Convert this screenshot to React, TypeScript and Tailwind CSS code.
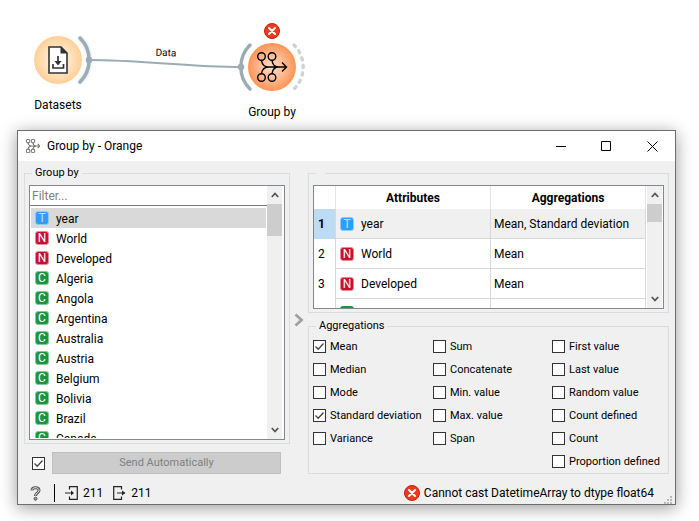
import { useState } from "react";

type Kind = "T" | "N" | "C";

const KIND_STYLE: Record<Kind, string> = {
  T: "bg-[#2f9df5] border-[#8ccbfa] text-[#b9e0ff]",
  N: "bg-[#c8102e] border-[#e58a98] text-white",
  C: "bg-[#1a9641] border-[#86c79a] text-white",
};

const VARIABLES: { name: string; kind: Kind }[] = [
  { name: "year", kind: "T" },
  { name: "World", kind: "N" },
  { name: "Developed", kind: "N" },
  { name: "Algeria", kind: "C" },
  { name: "Angola", kind: "C" },
  { name: "Argentina", kind: "C" },
  { name: "Australia", kind: "C" },
  { name: "Austria", kind: "C" },
  { name: "Belgium", kind: "C" },
  { name: "Bolivia", kind: "C" },
  { name: "Brazil", kind: "C" },
  { name: "Canada", kind: "C" },
];

const ROWS: { name: string; kind: Kind; agg: string }[] = [
  { name: "year", kind: "T", agg: "Mean, Standard deviation" },
  { name: "World", kind: "N", agg: "Mean" },
  { name: "Developed", kind: "N", agg: "Mean" },
];

const AGGREGATIONS = [
  ["Mean", "Median", "Mode", "Standard deviation", "Variance"],
  ["Sum", "Concatenate", "Min. value", "Max. value", "Span"],
  ["First value", "Last value", "Random value", "Count defined", "Count", "Proportion defined"],
];

function KindIcon({ kind }: { kind: Kind }) {
  return (
    <span
      className={`flex size-[14px] shrink-0 items-center justify-center rounded-[3px] border text-[12px] leading-[12px] ${KIND_STYLE[kind]}`}
    >
      {kind}
    </span>
  );
}

function ErrorIcon() {
  return (
    <svg className="size-4 shrink-0" viewBox="0 0 16 16" aria-hidden="true">
      <circle cx="8" cy="8" r="7.5" fill="#ee3a1c" stroke="#c4200c" />
      <path d="M5 5l6 6M11 5l-6 6" stroke="#fff" strokeWidth="2" strokeLinecap="round" />
    </svg>
  );
}

function GroupGlyph() {
  return (
    <g fill="none" stroke="currentColor">
      <circle cx="4.5" cy="4.5" r="3.8" />
      <circle cx="15" cy="4.5" r="3.8" />
      <circle cx="4.5" cy="25.5" r="3.8" />
      <circle cx="15" cy="25.5" r="3.8" />
      <path d="M4.5 8.5C5 12 7.5 15 12 15H29M4.5 21.5C5 18 7.5 15 12 15M15 8.5C15.5 12 18 15 22 15M15 21.5C15.5 18 18 15 22 15M25 10.5L29.5 15L25 19.5" />
    </g>
  );
}

function CheckBox({ id, checked, onChange, label }: { id: string; checked: boolean; onChange: () => void; label?: string }) {
  return (
    <span className="grid size-[13px] shrink-0">
      <input
        id={id}
        type="checkbox"
        aria-label={label}
        checked={checked}
        onChange={onChange}
        className="col-start-1 row-start-1 size-[13px] appearance-none border border-[#333333] bg-white"
      />
      {checked && (
        <svg className="pointer-events-none col-start-1 row-start-1 size-[13px]" viewBox="0 0 13 13" fill="none" aria-hidden="true">
          <path d="M2.5 6.5L5.2 9.2L10.5 3.5" stroke="#444" strokeWidth="1.3" />
        </svg>
      )}
    </span>
  );
}

function ScrollBar({ thumb, className }: { thumb: string; className: string }) {
  return (
    <div className={`flex w-[17px] shrink-0 flex-col ${className}`}>
      <div className="flex h-full flex-col bg-[#f0f0f0]">
        <button type="button" aria-label="Scroll up" className="flex h-[18px] items-center justify-center">
          <svg className="size-2" viewBox="0 0 8 8" fill="none" stroke="#555" strokeWidth="1.8">
            <path d="M0.8 6L4 2.5L7.2 6" />
          </svg>
        </button>
        <div className={`bg-[#cdcdcd] ${thumb}`} />
        <button type="button" aria-label="Scroll down" className="mt-auto flex h-[18px] items-center justify-center">
          <svg className="size-2" viewBox="0 0 8 8" fill="none" stroke="#555" strokeWidth="1.8">
            <path d="M0.8 2L4 5.5L7.2 2" />
          </svg>
        </button>
      </div>
    </div>
  );
}

function Workflow() {
  return (
    <div className="relative h-[130px]">
      <svg className="absolute top-0 left-0" width="340" height="130" viewBox="0 0 340 130" fill="none">
        <defs>
          <radialGradient id="data">
            <stop offset="0" stopColor="#fff1df" />
            <stop offset="0.5" stopColor="#ffe5c4" />
            <stop offset="1" stopColor="#ffcf96" />
          </radialGradient>
          <radialGradient id="transform">
            <stop offset="0" stopColor="#ffdcc6" />
            <stop offset="0.45" stopColor="#ffc09b" />
            <stop offset="1" stopColor="#ff9456" />
          </radialGradient>
          <filter id="glow" x="-50%" y="-20%" width="200%" height="140%">
            <feDropShadow dx="0" dy="0" stdDeviation="1.5" floodColor="#9cacb4" floodOpacity="0.5" />
          </filter>
        </defs>
        <path d="M89 60C140 60 190 67 241 67" stroke="#9cacb4" strokeWidth="2" />
        <g stroke="#9cacb4" strokeWidth="3.4" strokeLinecap="round">
          <path d="M80 38A31 31 0 0 1 80 82" filter="url(#glow)" />
          <path d="M250 45A31 31 0 0 0 250 89" />
          <path d="M294 45A31 31 0 0 1 294 89" stroke="#cbd3d7" strokeDasharray="2 5.6" />
        </g>
        <circle cx="89" cy="60" r="3.2" fill="#9cacb4" />
        <circle cx="241" cy="67" r="3.2" fill="#9cacb4" />
        <circle cx="58" cy="60" r="24" fill="url(#data)" />
        <circle cx="272" cy="67" r="24" fill="url(#transform)" />
        <path d="M49 47H61L67 53V73H49Z" fill="#fff" stroke="#333" strokeWidth="1.6" />
        <path d="M60.5 46.5L67.5 53.5H60.5Z" fill="#333" />
        <path d="M58 56V63M53 64V68H63.5V64" stroke="#333" strokeWidth="1.7" />
        <path d="M54.5 61H61.5L58 65.5Z" fill="#333" />
        <g transform="translate(257 52)" className="text-black" strokeWidth="1.4">
          <GroupGlyph />
        </g>
      </svg>
      <span className="absolute top-[45px] left-[166px] -translate-x-1/2 rotate-2 text-[10px] leading-4">Data</span>
      <span className="absolute top-[97px] left-[58px] -translate-x-1/2 text-[12px] leading-4">Datasets</span>
      <span className="absolute top-[104px] left-[272px] -translate-x-1/2 text-[12px] leading-4 whitespace-nowrap">Group by</span>
      <span className="absolute top-[23px] left-[264px]">
        <ErrorIcon />
      </span>
    </div>
  );
}

export default function App() {
  const [checked, setChecked] = useState<string[]>(["Mean", "Standard deviation"]);
  const [auto, setAuto] = useState(true);
  const toggle = (name: string) =>
    setChecked((now) => (now.includes(name) ? now.filter((n) => n !== name) : [...now, name]));

  return (
    <div className="overflow-hidden bg-white pb-4 font-['Roboto','Noto_Sans',sans-serif] text-[12px] leading-4 text-black">
      <Workflow />
      <main className="mr-[23px] ml-[17px] border border-[#6e6e6e] bg-[#f0f0f0] shadow-[0_3px_16px_rgba(0,0,0,0.4)]">
        <header className="flex h-[30px] items-center bg-white pl-2">
          <svg className="mr-[7px] size-[14px] text-[#777]" viewBox="0 0 30 30" strokeWidth="2.2" aria-hidden="true">
            <GroupGlyph />
          </svg>
          <h1 className="flex-1">Group by - Orange</h1>
          <button type="button" aria-label="Minimize" className="flex w-[45px] justify-center">
            <svg className="size-[11px]" viewBox="0 0 11 11" stroke="#000"><path d="M0 5.5H10" /></svg>
          </button>
          <button type="button" aria-label="Maximize" className="flex w-[45px] justify-center">
            <svg className="size-[11px]" viewBox="0 0 11 11" fill="none" stroke="#000"><path d="M0.5 0.5H9.5V9.5H0.5Z" /></svg>
          </button>
          <button type="button" aria-label="Close" className="flex w-[46px] justify-center">
            <svg className="size-[11px]" viewBox="0 0 11 11" stroke="#000"><path d="M0.5 0.5L10.5 10.5M10.5 0.5L0.5 10.5" /></svg>
          </button>
        </header>

        <div className="grid grid-cols-[minmax(0,266fr)_18px_minmax(0,361fr)] px-1.5 pt-1">
          <section className="flex flex-col">
            <fieldset className="min-w-0 border border-[#dcdcdc] px-1 pt-1 pb-[3px]">
              <legend className="ml-[3px] px-[3px] text-[11px] leading-4">Group by</legend>
              <div className="flex h-[255px] border border-[#828790] bg-white">
                <div className="flex min-w-0 flex-1 flex-col pb-px">
                  <input
                    type="text"
                    aria-label="Filter"
                    placeholder="Filter..."
                    className="h-5 w-full shrink-0 border-b border-[#7a7a7a] bg-white px-0.5 outline-none placeholder:text-[#808080]"
                  />
                  <ul className="mt-0.5 min-h-0 flex-1 overflow-hidden px-px">
                    {VARIABLES.map((v, i) => (
                      <li key={v.name} className={`flex h-5 items-center gap-[7px] pl-1 ${i === 0 ? "bg-[#d9d9d9]" : ""}`}>
                        <KindIcon kind={v.kind} />
                        <span className="pt-0.5">{v.name}</span>
                      </li>
                    ))}
                  </ul>
                </div>
                <ScrollBar thumb="h-8" className="pr-0.5" />
              </div>
            </fieldset>
            <div className="mt-2 flex h-[22px] items-center gap-[7px] pr-[9px] pl-2">
              <CheckBox id="auto" label="Send automatically" checked={auto} onChange={() => setAuto(!auto)} />
              <button type="button" disabled className="h-[22px] flex-1 border border-[#bfbfbf] bg-[#cccccc] text-[11px] text-[#808080]">
                Send Automatically
              </button>
            </div>
          </section>

          <div className="flex items-center justify-center">
            <svg className="size-[14px]" viewBox="0 0 14 14" fill="none" aria-hidden="true">
              <path d="M3.5 1.5L9.5 7L3.5 12.5" stroke="#a0a0a0" strokeWidth="2.8" />
            </svg>
          </div>

          <section className="flex flex-col gap-[5px]">
            <fieldset className="min-w-0 border border-[#dcdcdc] px-1 pt-1 pb-[3px]">
              <legend className="ml-[3px] h-4 w-[9px]" />
              <div className="flex h-[124px] border border-[#828790] bg-white">
                <div className="min-w-0 flex-1 overflow-hidden">
                  <table className="w-full table-fixed border-separate border-spacing-0 text-left">
                    <thead>
                      <tr className="h-[23px] text-center">
                        <th className="w-[22px] border-r border-[#e5e5e5] p-0" />
                        <th className="border-r border-[#e5e5e5] p-0 font-bold">Attributes</th>
                        <th className="border-r border-[#e5e5e5] p-0 font-bold">Aggregations</th>
                      </tr>
                    </thead>
                    <tbody>
                      {ROWS.map((r, i) => (
                        <tr key={r.name} className={`h-[30px] ${i === 0 ? "bg-[#f0f0f0]" : "bg-white"}`}>
                          <th
                            scope="row"
                            className={`border-r border-[#d8d8d8] p-0 pl-1 ${i === 0 ? "bg-[#bcdcf4] font-bold" : "font-normal"}`}
                          >
                            {i + 1}
                          </th>
                          <td className="border-r border-b border-[#d8d8d8] p-0 pl-1">
                            <span className="flex items-center gap-[7px]">
                              <KindIcon kind={r.kind} />
                              {r.name}
                            </span>
                          </td>
                          <td className="border-r border-b border-[#d8d8d8] p-0 pl-[3px] whitespace-nowrap">{r.agg}</td>
                        </tr>
                      ))}
                      <tr className="h-[30px]">
                        <th scope="row" className="border-r border-[#d8d8d8] p-0" />
                        <td className="border-r border-[#d8d8d8] p-0 pt-[7px] pl-1 align-top">
                          <span className="block size-[14px] rounded-[3px] bg-[#1a9641]" />
                        </td>
                        <td className="border-r border-[#d8d8d8] p-0" />
                      </tr>
                    </tbody>
                  </table>
                </div>
                <ScrollBar thumb="h-[18px]" className="px-px" />
              </div>
            </fieldset>

            <fieldset className="min-w-0 border border-[#dcdcdc] px-1 pt-1 pb-[3px] text-[11px]">
              <legend className="ml-[3px] px-[3px] leading-4">Aggregations</legend>
              <div className="grid grid-cols-[120fr_119fr_112fr]">
                {AGGREGATIONS.map((column) => (
                  <div key={column[0]} className="flex min-w-0 flex-col gap-1.5">
                    {column.map((name) => (
                      <label key={name} className="flex h-[17px] items-center gap-1 whitespace-nowrap">
                        <CheckBox id={name} checked={checked.includes(name)} onChange={() => toggle(name)} />
                        {name}
                      </label>
                    ))}
                  </div>
                ))}
              </div>
            </fieldset>
          </section>
        </div>

        <footer className="mt-2 flex h-[22px] items-center pr-[3px] pl-3">
          <svg className="h-[15px] w-[11px]" viewBox="0 0 11 15" fill="none" aria-hidden="true">
            <path d="M2 4.5C2 0.8 9 0.8 9 4.5C9 7 5.5 6.8 5.5 10" stroke="#555" strokeWidth="3" />
            <path d="M2 4.5C2 0.8 9 0.8 9 4.5C9 7 5.5 6.8 5.5 9.5" stroke="#eee" strokeWidth="1" />
            <circle cx="5.5" cy="12.7" r="1.5" fill="#999" stroke="#555" />
          </svg>
          <span className="mr-2.5 ml-[13px] h-[18px] w-px bg-black" />
          <svg className="mr-[5px] h-[14px] w-[13px]" viewBox="0 0 13 14" fill="none" stroke="#222" strokeWidth="1.2" aria-hidden="true">
            <path d="M4.5 3.5V0.7H12.3V13.3H4.5V10.5M0 7H7" />
            <path d="M6 4.5L9 7L6 9.5Z" fill="#222" stroke="none" />
          </svg>
          <span>211</span>
          <svg className="mr-[5px] ml-2.5 h-[14px] w-[13px]" viewBox="0 0 13 14" fill="none" stroke="#222" strokeWidth="1.2" aria-hidden="true">
            <path d="M8.5 3.5V0.7H0.7V13.3H8.5V10.5M4 7H10" />
            <path d="M9 4.5L12.5 7L9 9.5Z" fill="#222" stroke="none" />
          </svg>
          <span>211</span>
          <p className="ml-auto flex items-center gap-1">
            <ErrorIcon />
            Cannot cast DatetimeArray to dtype float64
          </p>
          <svg className="ml-2.5 size-2 self-end" viewBox="0 0 8 8" fill="#b8b8b8" aria-hidden="true">
            <path d="M6 0h2v2h-2zM3 3h2v2h-2zM6 3h2v2h-2zM0 6h2v2h-2zM3 6h2v2h-2zM6 6h2v2h-2z" />
          </svg>
        </footer>
      </main>
    </div>
  );
}
